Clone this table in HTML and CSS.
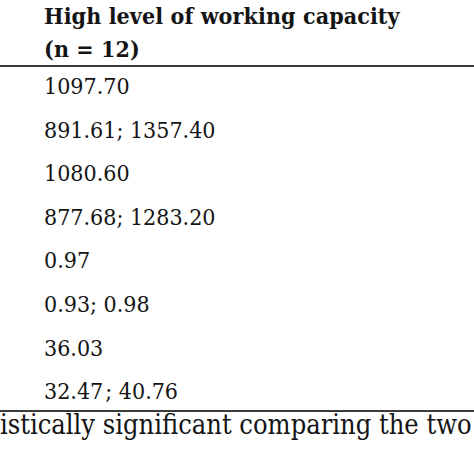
FILE: index.html
```html
<!DOCTYPE html>
<html lang="en">
<head>
<meta charset="utf-8">
<title>Working capacity table</title>
<link rel="stylesheet" href="styles.css">
</head>
<body>
<div class="sheet">
  <div class="thead">
    <div class="th">High level of working capacity</div>
    <div class="th">(n = 12)</div>
  </div>
  <div class="rows">
    <div class="cell">1097.70</div>
    <div class="cell">891.61; 1357.40</div>
    <div class="cell">1080.60</div>
    <div class="cell">877.68; 1283.20</div>
    <div class="cell">0.97</div>
    <div class="cell">0.93; 0.98</div>
    <div class="cell">36.03</div>
    <div class="cell">32.47&#8202;; 40.76</div>
  </div>
  <div class="note">istically significant comparing the two</div>
</div>
</body>
</html>
```

FILE: styles.css
```css
html, body {
  margin: 0;
  padding: 0;
  background: #ffffff;
}
.sheet {
  width: 474px;
  height: 474px;
  overflow: hidden;
  font-family: "DejaVu Serif Condensed", "DejaVu Serif", serif;
  font-stretch: condensed;
  color: #141414;
  display: flex;
  flex-direction: column;
}
.thead {
  padding-left: 44px;
  border-bottom: 2px solid #3a3a3a;
}
.th {
  font-weight: bold;
  font-size: 23px;
  letter-spacing: 0.1px;
  line-height: 32.5px;
  white-space: nowrap;
}
.rows {
  display: flex;
  flex-direction: column;
  gap: 5.6px;
  padding-left: 44px;
  border-bottom: 2px solid #3a3a3a;
}
.cell {
  font-size: 23px;
  line-height: 38px;
  white-space: nowrap;
}
.note {
  font-size: 27px;
  line-height: 30px;
  margin-top: -2px;
  white-space: nowrap;
}
```
